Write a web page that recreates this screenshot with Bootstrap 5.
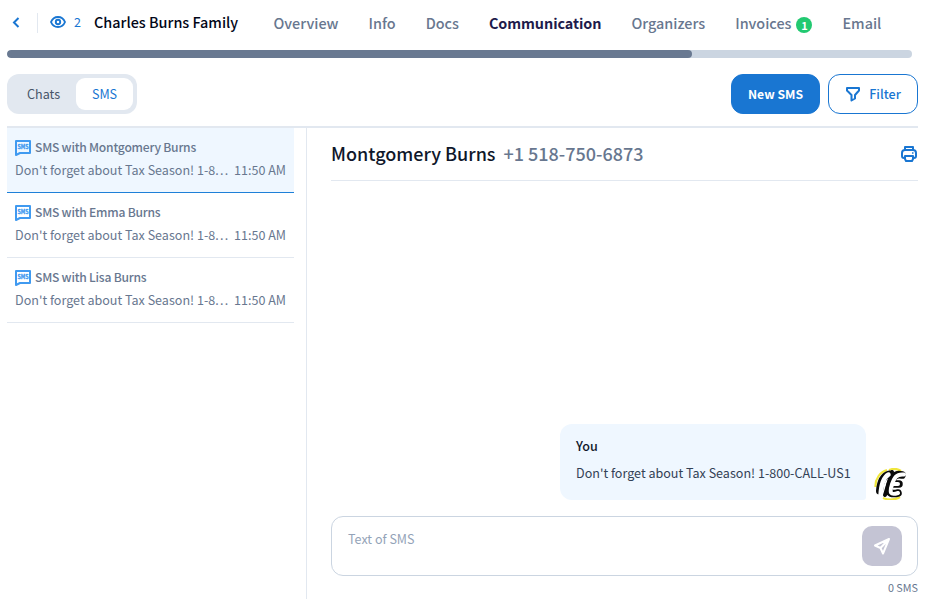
<!DOCTYPE html>
<html lang="en">
<head>
<meta charset="utf-8">
<meta name="viewport" content="width=device-width, initial-scale=1">
<title>Charles Burns Family – Communication</title>
<link href="https://cdn.jsdelivr.net/npm/bootstrap@5.3.0/dist/css/bootstrap.min.css" rel="stylesheet">
<style>
  :root { --blue:#1976d2; --slate:#68778f; --line:#e2e8f0; --ink:#0f172a; }
  body { font-family:"Noto Sans CJK SC","Noto Sans CJK JP","Noto Sans",sans-serif; font-size:12.55px; line-height:20px; color:var(--slate); background:#fff; }
  svg { display:block; flex:none; }
  .page { height:599px; padding:0 20px 0 7px; overflow:hidden; }
  .topbar { height:50px; }
  .back { width:31px; height:20px; padding-left:5px; margin-top:-5px; border-right:1px solid var(--line); color:var(--blue); }
  .viewers { width:56px; padding-left:12px; gap:8px; margin-top:-7px; color:var(--blue); }
  .client { width:179.5px; font-size:14.4px; font-weight:500; color:#020617; margin-top:-7px; white-space:nowrap; }
  .tabs { gap:30px; font-size:14.4px; font-weight:500; margin-top:-5px; }
  .tabs .nav-link { padding:0; color:var(--slate); white-space:nowrap; }
  .tabs .nav-link.active { color:#1e1b4b; font-weight:700; letter-spacing:-.06px; }
  .count { width:16px; height:16px; line-height:16px; font-size:11px; font-weight:700; background:#22c971; margin-left:5px; margin-top:4px; }
  .scroller { height:8px; width:905px; border-radius:4px; background:#cbd5e1; }
  .scroller .progress-bar { background:#697991; border-radius:4px; }
  .tools { height:70px; padding:16px 0 12px; border-bottom:2px solid var(--line); }
  .switcher { width:130px; height:40px; padding:4px; border-radius:12px; background:var(--line); }
  .switcher .btn { padding:0; font-size:12.6px; line-height:32px; border:0; border-radius:9px; color:#475569; }
  .switcher .btn.active { width:57px; background:#fff; color:var(--blue); }
  .action { height:40px; border-radius:12px; font-size:12.6px; padding:0; --bs-btn-color:var(--blue); --bs-btn-border-color:var(--blue); }
  .new-sms { width:89px; --bs-btn-bg:var(--blue); --bs-btn-color:#fff; font-weight:700; font-size:12.2px; }
  .filter { width:90px; gap:8px; font-weight:500; }
  .threads { width:300px; padding-right:12px; border-right:1px solid var(--line); }
  .thread { height:65px; padding:9px 8px 11px; border:0; border-bottom:1px solid var(--line); border-radius:0; color:var(--slate); }
  .thread.current { background:#eff7ff; border-bottom-color:#1e80d8; color:var(--slate); }
  .thread-title { font-weight:500; gap:4px; height:20px; font-size:12.1px; letter-spacing:-.22px; }
  .thread-text { margin-top:3px; height:20px; }
  .dots { letter-spacing:1.3px; }
  .glyph { color:#409af0; letter-spacing:0; margin-top:2px; }
  .chat { padding-left:24px; }
  .chat-head { height:53px; padding-bottom:2px; border-bottom:1px solid var(--line); font-size:18px; font-weight:500; gap:8px; }
  .chat-head svg { margin-top:2px; }
  .contact { color:var(--ink); }
  .bubble { width:306px; height:76px; padding:12px 0 12px 16px; border-radius:12px 12px 3px 12px; background:#eff7ff; color:#334155; white-space:nowrap; }
  .bubble-who { font-weight:500; color:var(--ink); margin-bottom:7px; }
  .avatar { margin:0 12px 0 8px; }
  .composer { height:60px; margin-top:16px; padding:9px 15px 9px 16px; border:1px solid #cbd5e1; border-radius:12px; color:#94a3b8; }
  .hint { margin-top:3px; }
  .send { width:40px; height:40px; border-radius:10px; background:#c4c4d4; color:#fff; }
  .tally { height:23px; padding-top:2px; font-size:10.8px; line-height:18px; }
</style>
</head>
<body>
<div class="page d-flex flex-column">
  <header class="topbar d-flex align-items-center">
    <a class="back d-flex align-items-center" href="#" aria-label="Back"><svg width="8" height="12" viewBox="0 0 8 12" fill="none" stroke="currentColor" stroke-width="2"><path d="M6.500 1 2 5.500l4.500 4.500"/></svg></a>
    <div class="viewers d-flex align-items-center"><svg width="16" height="12" viewBox="0 0 16 12" fill="none" stroke="currentColor" stroke-width="1.900"><path d="M1 6c1.300-3.200 3.900-5 7-5s5.700 1.800 7 5c-1.300 3.200-3.900 5-7 5S2.300 9.200 1 6z"/><circle cx="8" cy="6" r="2.200"/></svg><span>2</span></div>
    <div class="client">Charles Burns Family</div>
    <nav class="tabs nav flex-nowrap">
      <a class="nav-link" href="#">Overview</a>
      <a class="nav-link" href="#">Info</a>
      <a class="nav-link" href="#">Docs</a>
      <a class="nav-link active" href="#">Communication</a>
      <a class="nav-link" href="#">Organizers</a>
      <a class="nav-link d-flex align-items-center" href="#">Invoices<span class="count rounded-circle text-white text-center">1</span></a>
      <a class="nav-link" href="#">Email</a>
    </nav>
  </header>
  <div class="scroller progress flex-shrink-0"><div class="progress-bar" style="width:75.700%"></div></div>
  <div class="tools d-flex justify-content-between flex-shrink-0">
    <div class="switcher d-flex">
      <button class="btn flex-fill" type="button">Chats</button>
      <button class="btn active" type="button">SMS</button>
    </div>
    <div class="d-flex gap-2">
      <button class="btn action new-sms" type="button">New SMS</button>
      <button class="btn action filter d-flex align-items-center justify-content-center" type="button"><svg width="16" height="16" viewBox="0 0 16 16" fill="none" stroke="currentColor" stroke-width="2" stroke-linejoin="round"><path d="M2 2h12v2.500L10 9v3.500L6.500 14.500V9L2 4.500z"/></svg><span>Filter</span></button>
    </div>
  </div>
  <main class="d-flex flex-grow-1">
    <aside class="threads list-group rounded-0 flex-shrink-0">
      <a class="thread current list-group-item" href="#">
        <div class="thread-title d-flex align-items-center"><svg class="glyph" width="16" height="16" viewBox="0 0 16 16"><path d="M1 1h14v12H5l-4 2z" fill="none" stroke="currentColor" stroke-width="2" stroke-linejoin="round"/><text x="8" y="9" font-size="5.500" font-weight="700" text-anchor="middle" textLength="11" lengthAdjust="spacingAndGlyphs" fill="currentColor" stroke="currentColor" stroke-width=".3">SMS</text></svg><span>SMS with Montgomery Burns</span></div>
        <div class="thread-text d-flex justify-content-between text-nowrap"><span>Don't forget about Tax Season! 1-8<span class="dots">...</span></span><time>11:50 AM</time></div>
      </a>
      <a class="thread list-group-item" href="#">
        <div class="thread-title d-flex align-items-center"><svg class="glyph" width="16" height="16" viewBox="0 0 16 16"><path d="M1 1h14v12H5l-4 2z" fill="none" stroke="currentColor" stroke-width="2" stroke-linejoin="round"/><text x="8" y="9" font-size="5.500" font-weight="700" text-anchor="middle" textLength="11" lengthAdjust="spacingAndGlyphs" fill="currentColor" stroke="currentColor" stroke-width=".3">SMS</text></svg><span>SMS with Emma Burns</span></div>
        <div class="thread-text d-flex justify-content-between text-nowrap"><span>Don't forget about Tax Season! 1-8<span class="dots">...</span></span><time>11:50 AM</time></div>
      </a>
      <a class="thread list-group-item" href="#">
        <div class="thread-title d-flex align-items-center"><svg class="glyph" width="16" height="16" viewBox="0 0 16 16"><path d="M1 1h14v12H5l-4 2z" fill="none" stroke="currentColor" stroke-width="2" stroke-linejoin="round"/><text x="8" y="9" font-size="5.500" font-weight="700" text-anchor="middle" textLength="11" lengthAdjust="spacingAndGlyphs" fill="currentColor" stroke="currentColor" stroke-width=".3">SMS</text></svg><span>SMS with Lisa Burns</span></div>
        <div class="thread-text d-flex justify-content-between text-nowrap"><span>Don't forget about Tax Season! 1-8<span class="dots">...</span></span><time>11:50 AM</time></div>
      </a>
    </aside>
    <section class="chat flex-grow-1 d-flex flex-column">
      <div class="chat-head d-flex align-items-center">
        <span class="contact">Montgomery Burns</span><span>+1 518-750-6873</span>
        <svg class="ms-auto" width="18" height="18" viewBox="0 0 18 18" fill="none" stroke="#1976d2" stroke-width="2" stroke-linejoin="round"><path d="M5 5V2h8v3M5 13H4a2 2 0 0 1-2-2V8a3 3 0 0 1 3-3h8a3 3 0 0 1 3 3v3a2 2 0 0 1-2 2h-1"/><path d="M5 11h8v3l-1 2H6l-1-2z"/><path d="M12 8h1.500" stroke-width="1.500"/></svg>
      </div>
      <div class="mt-auto d-flex justify-content-end align-items-end">
        <div class="bubble"><div class="bubble-who">You</div><div>Don't forget about Tax Season! 1-800-CALL-US1</div></div>
        <svg class="avatar" width="32" height="32" viewBox="0 0 32 32"><path d="M13 2C6 4 1 11 1.500 19M15 2c5-2 9-1 12 1M9 30c5 2 12 2 17-1" fill="none" stroke="#f0e63c" stroke-width="2.200"/><g fill="none" stroke-linecap="round" stroke-linejoin="round"><path d="M15 6C9 8 6 15 5.500 23" stroke="#0a0a0a" stroke-width="7"/><path d="M18 4 11 27" stroke="#0a0a0a" stroke-width="4"/><path d="M28 7c-8-2-10 4-12 10-2 7-1 10 8 8M18 16h7" stroke="#0a0a0a" stroke-width="7.500"/><path d="M14.500 6.500C10 9 7 17 6.500 28" stroke="#fff" stroke-width="4.500"/><path d="M30 6.500c-8-1-10 4-12 10-2.500 8-2 11 6 8.500M18 16h6" stroke="#fff" stroke-width="4"/></g></svg>
      </div>
      <div class="composer d-flex justify-content-between flex-shrink-0">
        <span class="hint">Text of SMS</span>
        <button class="send btn border-0 p-0 d-flex align-items-center justify-content-center" type="button" aria-label="Send"><svg width="18" height="18" viewBox="0 0 18 18" fill="none" stroke="currentColor" stroke-width="2" stroke-linejoin="round"><path d="M16 2 2 8.500l5.500 2.500L10 16.500zM16 2 7.500 11"/></svg></button>
      </div>
      <div class="tally text-end flex-shrink-0">0 SMS</div>
    </section>
  </main>
</div>
<script src="https://cdn.jsdelivr.net/npm/bootstrap@5.3.0/dist/js/bootstrap.bundle.min.js"></script>
</body>
</html>
